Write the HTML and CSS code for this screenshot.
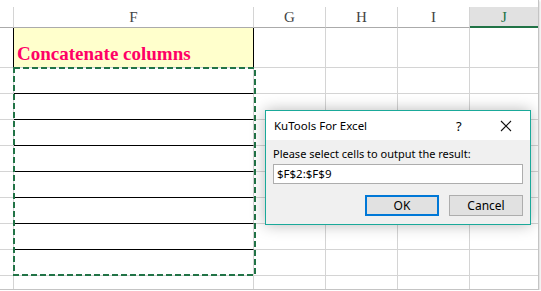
FILE: index.html
```html
<!DOCTYPE html>
<html lang="en">
<head>
  <meta charset="UTF-8" />
  <title>Concatenate columns</title>
  <link rel="stylesheet" href="styles.css">
</head>
<body>
  <div class="sheet">
    <div class="grid">
      <!-- top strip -->
      <div class="strip"></div>

      <!-- column headers -->
      <div class="hdr corner"></div>
      <div class="hdr">F</div>
      <div class="hdr">G</div>
      <div class="hdr">H</div>
      <div class="hdr">I</div>
      <div class="hdr active">J</div>

      <!-- row 1 -->
      <div class="rh tall"></div>
      <div class="cell title-cell">Concatenate columns</div>
      <div class="cell"></div><div class="cell"></div><div class="cell"></div><div class="cell last"></div>

      <!-- rows 2-9 -->
      <div class="rh"></div><div class="cell fcol"></div><div class="cell"></div><div class="cell"></div><div class="cell"></div><div class="cell last"></div>
      <div class="rh"></div><div class="cell fcol"></div><div class="cell"></div><div class="cell"></div><div class="cell"></div><div class="cell last"></div>
      <div class="rh"></div><div class="cell fcol"></div><div class="cell"></div><div class="cell"></div><div class="cell"></div><div class="cell last"></div>
      <div class="rh"></div><div class="cell fcol"></div><div class="cell"></div><div class="cell"></div><div class="cell"></div><div class="cell last"></div>
      <div class="rh"></div><div class="cell fcol"></div><div class="cell"></div><div class="cell"></div><div class="cell"></div><div class="cell last"></div>
      <div class="rh"></div><div class="cell fcol"></div><div class="cell"></div><div class="cell"></div><div class="cell"></div><div class="cell last"></div>
      <div class="rh"></div><div class="cell fcol"></div><div class="cell"></div><div class="cell"></div><div class="cell"></div><div class="cell last"></div>
      <div class="rh"></div><div class="cell fcol lastf"></div><div class="cell"></div><div class="cell"></div><div class="cell"></div><div class="cell last"></div>

      <!-- row 10 -->
      <div class="rh end"></div><div class="cell end"></div><div class="cell end"></div><div class="cell end"></div><div class="cell end"></div><div class="cell end last"></div>
    </div>

    <!-- copy marquee around F2:F9 -->
    <svg class="marquee" width="244" height="212" viewBox="0 0 244 212">
      <rect x="1" y="1" width="241" height="207" fill="none" stroke="#217346" stroke-width="2" stroke-dasharray="6 3"/>
    </svg>

    <div class="dialog">
      <div class="dlg-title">
        <span class="dlg-name">KuTools For Excel</span>
        <span class="dlg-help">?</span>
        <svg class="dlg-close" width="12" height="12" viewBox="0 0 12 12">
          <path d="M1 1 L11 11 M11 1 L1 11" stroke="#111" stroke-width="1.1" fill="none"/>
        </svg>
      </div>
      <div class="dlg-body">
        <div class="dlg-label">Please select cells to output the result:</div>
        <div class="dlg-input">$F$2:$F$9</div>
        <div class="dlg-buttons">
          <div class="btn default">OK</div>
          <div class="btn">Cancel</div>
        </div>
      </div>
    </div>
  </div>
</body>
</html>
```

FILE: styles.css
```css
:root {
  --grid: #d4d4d4;
  --excel-green: #217346;
  --accent: #1aa99a;
}
body {
  margin: 0;
  background: #fff;
  font-family: "Liberation Serif", serif;
}
.sheet {
  position: relative;
  width: 538px;
  height: 289px;
  overflow: hidden;
  border-right: 1px solid #c4c4c4;
  border-bottom: 1px solid #c4c4c4;
  box-shadow: 1px 1px 2px rgba(0, 0, 0, 0.15);
}
.grid {
  display: grid;
  grid-template-columns: 14px 240px 72px 72px 72px 68px;
  grid-template-rows: 7px 21px 40px repeat(8, 26px) 14px;
}
.strip {
  grid-column: 1 / -1;
}
.hdr {
  border-right: 1px solid var(--grid);
  border-bottom: 1px solid #ababab;
  color: #444;
  font-size: 15px;
  display: flex;
  align-items: center;
  justify-content: center;
  padding-top: 1px;
}
.hdr.active {
  background: #e1e1e1;
  color: var(--excel-green);
  border-right: none;
  border-bottom: 2px solid var(--excel-green);
}
.rh {
  border-right: 1px solid var(--grid);
  border-bottom: 1px solid var(--grid);
}
.cell {
  border-right: 1px solid var(--grid);
  border-bottom: 1px solid var(--grid);
}
.cell.last {
  border-right: none;
}
.cell.end, .rh.end {
  border-bottom: none;
}
.title-cell {
  background: #ffffcc;
  border-right: 1px solid #000;
  margin-left: -1px;
  border-left: 1px solid #000;
  color: #ff0066;
  font-weight: bold;
  font-size: 19px;
  display: flex;
  align-items: flex-end;
  padding-left: 3px;
  padding-bottom: 2px;
  white-space: nowrap;
}
.fcol {
  border-bottom: 1px solid #000;
}
.fcol.lastf {
  border-bottom: 1px solid var(--grid);
}
.marquee {
  position: absolute;
  left: 13px;
  top: 67px;
}
.dialog {
  position: absolute;
  left: 265px;
  top: 110px;
  width: 264px;
  border: 1px solid var(--accent);
  background: #f0f0f0;
  box-shadow: 0 0 14px rgba(0, 0, 0, 0.28);
  font-family: "Noto Sans", sans-serif;
  font-size: 11px;
  color: #000;
}
.dlg-title {
  background: #fff;
  height: 29px;
  display: flex;
  align-items: center;
  padding-left: 8px;
  font-size: 11.5px;
}
.dlg-name {
  flex: 1;
}
.dlg-help {
  width: 14px;
  margin-right: 30px;
  font-size: 13px;
}
.dlg-close {
  margin-right: 18px;
}
.dlg-body {
  padding: 6px 7px 8px 7px;
}
.dlg-label {
  line-height: 16px;
  font-size: 11px;
}
.dlg-input {
  margin-top: 2px;
  height: 18px;
  line-height: 18px;
  border: 1px solid #adadad;
  background: #fff;
  padding-left: 3px;
  font-size: 11.5px;
}
.dlg-buttons {
  display: flex;
  justify-content: flex-end;
  gap: 10px;
  margin-top: 11px;
}
.btn {
  width: 72px;
  height: 19px;
  line-height: 19px;
  text-align: center;
  background: #e1e1e1;
  border: 1px solid #adadad;
  font-size: 12px;
}
.btn.default {
  width: 70px;
  height: 17px;
  line-height: 17px;
  border: 2px solid #0078d7;
}
```
